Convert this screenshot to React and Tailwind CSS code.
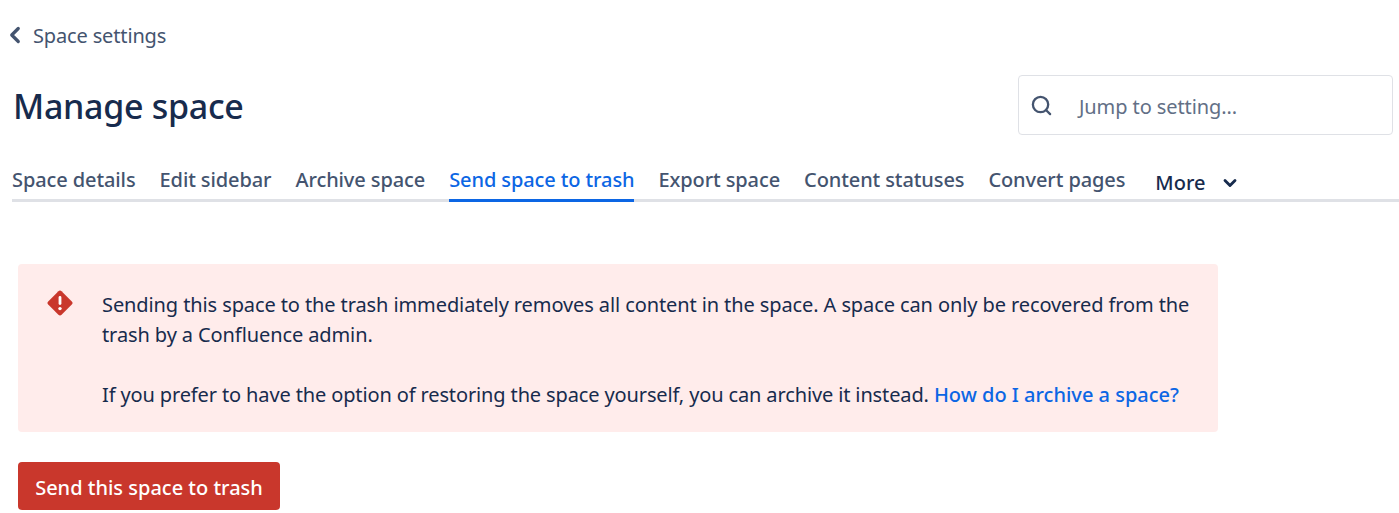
import { ChevronLeft, ChevronDown, Search } from 'lucide-react';

const tabs = [
  'Space details',
  'Edit sidebar',
  'Archive space',
  'Send space to trash',
  'Export space',
  'Content statuses',
  'Convert pages',
];

const activeTab = 'Send space to trash';

function WarningIcon() {
  return (
    <svg viewBox="0 0 26 26" className="w-[26px] h-[26px]">
      <path
        fill="#c9372c"
        d="M11.4 1.2a2.3 2.3 0 0 1 3.2 0l10.2 10.2a2.3 2.3 0 0 1 0 3.2L14.6 24.8a2.3 2.3 0 0 1-3.2 0L1.2 14.6a2.3 2.3 0 0 1 0-3.2z"
      />
      <rect x="11.6" y="6" width="2.8" height="9" rx="1.4" fill="#fff" />
      <circle cx="13" cy="18.6" r="1.7" fill="#fff" />
    </svg>
  );
}

export default function App() {
  return (
    <div className="w-[1399px] h-[513px] overflow-hidden bg-white font-['Noto_Sans',sans-serif] text-[#172b4d]">
      {/* Back link */}
      <div className="flex items-center h-[24px] mt-[24px] ml-[2px] text-[#44546f]">
        <ChevronLeft className="w-[26px] h-[26px] -mt-[3px]" strokeWidth={3} />
        <span className="ml-[5px] text-[20px] tracking-[-0.15px]">Space settings</span>
      </div>

      {/* Title and search */}
      <div className="flex items-center justify-between mt-[27px] pl-[13px] pr-[6px]">
        <h1 className="h-[60px] pt-[1px] text-[34px] leading-[60px] font-medium tracking-[-0.3px] text-[#172b4d]">Manage space</h1>
        <div className="flex items-center w-[375px] h-[60px] border border-[#dfe1e6] rounded-[4px]">
          <Search className="w-[23px] h-[23px] ml-[11px] text-[#44546f]" strokeWidth={2.4} />
          <span className="ml-[26px] pt-[4px] text-[20px] tracking-[-0.1px] text-[#626f86]">Jump to setting...</span>
        </div>
      </div>

      {/* Tabs */}
      <div className="flex items-end gap-[24px] ml-[12px] mt-[25px] h-[42px] border-b-[3px] border-[#dfe1e6]">
        {tabs.map((tab) => (
          <div
            key={tab}
            className={`h-[42px] -mb-[3px] leading-[40px] text-[20px] font-medium tracking-[-0.1px] whitespace-nowrap ${
              tab === activeTab ? 'text-[#0c66e4] border-b-[3px] border-[#0c66e4]' : 'text-[#44546f]'
            }`}
          >
            {tab}
          </div>
        ))}
        <div className="flex items-center self-start mt-[6px] ml-[6px] text-[#172b4d]">
          <span className="text-[20px] font-medium leading-[34px]">More</span>
          <ChevronDown className="w-[20px] h-[20px] ml-[15px]" strokeWidth={3.4} />
        </div>
      </div>

      {/* Warning */}
      <div className="flex w-[1200px] h-[168px] ml-[18px] mt-[62px] bg-[#ffeceb] rounded-[4px]">
        <div className="w-[84px] pl-[29px] pt-[26px] shrink-0">
          <WarningIcon />
        </div>
        <div className="pt-[26px] text-[20px] leading-[30px] tracking-[-0.1px] text-[#172b4d]">
          <p>
            Sending this space to the trash immediately removes all content in the space. A space can only be recovered from the
            <br />
            trash by a Confluence admin.
          </p>
          <p className="mt-[30px] tracking-[-0.13px]">
            If you prefer to have the option of restoring the space yourself, you can archive it instead.{' '}
            <a className="font-medium tracking-[0px] text-[#0c66e4]">How do I archive a space?</a>
          </p>
        </div>
      </div>

      {/* Action */}
      <button className="block w-[262px] h-[48px] pt-[4px] ml-[18px] mt-[30px] bg-[#c9372c] rounded-[4px] text-white text-[20px] font-medium">
        Send this space to trash
      </button>
    </div>
  );
}
